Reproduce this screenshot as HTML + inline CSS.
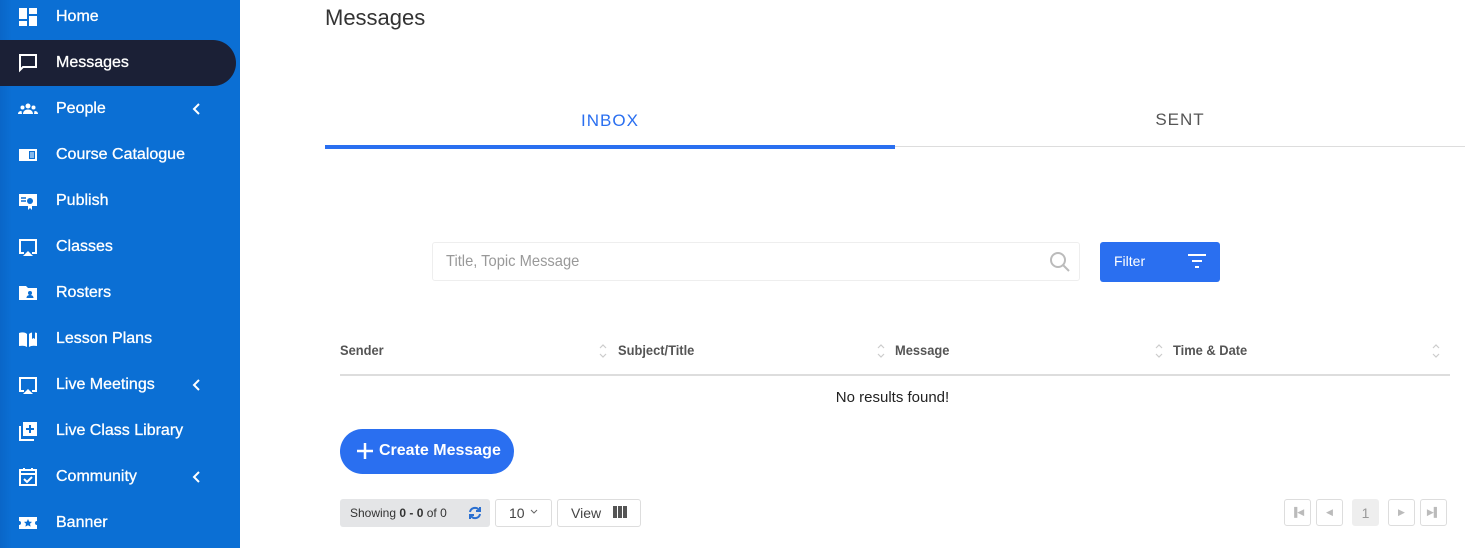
<!DOCTYPE html>
<html><head><style>
*{box-sizing:border-box;margin:0;padding:0}
body{width:1475px;height:548px;overflow:hidden;background:#fff;font-family:"Liberation Sans",sans-serif;position:relative}
#sb{position:absolute;left:0;top:0;width:240px;height:548px;background:linear-gradient(90deg,#0a66c8 0,#0b6fd4 12px,#0b6fd4 100%)}
.it{position:absolute;left:0;width:236px;height:46px;color:#fff;font-size:16px;display:flex;align-items:center}
.it svg{position:absolute;left:18px;width:20px;height:20px}
.it span{position:absolute;left:56px;-webkit-text-stroke:.3px #fff}
.it svg.ch{left:190px;width:12px;height:14px}
.act{background:#1b2036;border-radius:0 23px 23px 0}
.abs{position:absolute}
.th{position:absolute;top:342px;font-size:14px;color:#555;font-weight:bold;transform:scaleX(.92);transform-origin:left}
.sort{position:absolute;top:342px}
.pb{position:absolute;top:499px;width:27px;height:27px;border:1px solid #ddd;border-radius:3px;color:#bbb;font-size:9px;display:flex;align-items:center;justify-content:center}
</style></head><body>
<div id="sb">
<div class="it" style="top:-6px"><svg viewBox="0 0 20 20" fill="#fff"><rect x="1" y="1" width="8" height="11"/><rect x="11" y="1" width="8" height="6"/><rect x="1" y="14" width="8" height="5"/><rect x="11" y="9" width="8" height="10"/></svg><span>Home</span></div>
<div class="it act" style="top:40px"><svg viewBox="0 0 20 20" fill="none" stroke="#fff" stroke-width="2"><path d="M2 2h16v12H5l-3 3z"/></svg><span>Messages</span></div>
<div class="it" style="top:86px"><svg viewBox="0 0 20 20" fill="#fff"><circle cx="10" cy="7" r="2.5"/><circle cx="4.5" cy="8.5" r="2"/><circle cx="15.5" cy="8.5" r="2"/><path d="M5 15c0-3 2.5-4.5 5-4.5s5 1.5 5 4.5zM0 15c0-2 1.5-3 3.5-3L4 15zM20 15c0-2-1.5-3-3.5-3L16 15z"/></svg><span>People</span><svg class="ch" viewBox="0 0 12 14" fill="none" stroke="#fff" stroke-width="2"><path d="M9 2L4 7l5 5"/></svg></div>
<div class="it" style="top:132px"><svg viewBox="0 0 20 20" fill="#fff"><path d="M1 4h18v12H1z"/><path d="M11 6h6v8h-6z" fill="#0b6fd4"/><path d="M12 8h4M12 10h4M12 12h4" stroke="#fff"/></svg><span>Course Catalogue</span></div>
<div class="it" style="top:178px"><svg viewBox="0 0 20 20" fill="#fff"><path d="M1 3h18v12h-5v4l-2-2-2 2v-4H1z"/><circle cx="12" cy="10" r="3" fill="#0b6fd4"/><path d="M3 7h5M3 10h5" stroke="#0b6fd4" stroke-width="1.5"/></svg><span>Publish</span></div>
<div class="it" style="top:224px"><svg viewBox="0 0 20 20" fill="none" stroke="#fff" stroke-width="2"><path d="M6 16H2V3h16v13h-4"/><path d="M5 19l5-5 5 5z" fill="#fff" stroke="none"/></svg><span>Classes</span></div>
<div class="it" style="top:270px"><svg viewBox="0 0 20 20" fill="#fff"><path d="M1 3h7l2 2h9v12H1z"/><circle cx="12" cy="10" r="2" fill="#0b6fd4"/><path d="M8.5 15c0-2 1.5-3 3.5-3s3.5 1 3.5 3z" fill="#0b6fd4"/></svg><span>Rosters</span></div>
<div class="it" style="top:316px"><svg viewBox="0 0 20 20" fill="#fff"><path d="M1 4c3-1 6-1 8 1v13c-2-1.5-5-1.5-8-1zM11 5c2-2 5-2 8-1v13c-3-.5-6-.5-8 1z"/><path d="M14 3v7l1.5-1 1.5 1V3" fill="#0b6fd4"/></svg><span>Lesson Plans</span></div>
<div class="it" style="top:362px"><svg viewBox="0 0 20 20" fill="none" stroke="#fff" stroke-width="2"><path d="M6 16H2V3h16v13h-4"/><path d="M5 19l5-5 5 5z" fill="#fff" stroke="none"/></svg><span>Live Meetings</span><svg class="ch" viewBox="0 0 12 14" fill="none" stroke="#fff" stroke-width="2"><path d="M9 2L4 7l5 5"/></svg></div>
<div class="it" style="top:408px"><svg viewBox="0 0 20 20" fill="none" stroke="#fff" stroke-width="2"><path d="M2 5v14h14"/><rect x="5" y="1" width="14" height="14" fill="#fff" stroke="none"/><path d="M12 4v8M8 8h8" stroke="#0b6fd4"/></svg><span>Live Class Library</span></div>
<div class="it" style="top:454px"><svg viewBox="0 0 20 20" fill="none" stroke="#fff" stroke-width="2"><rect x="2" y="3" width="16" height="15"/><path d="M2 7h16M6 1v3M14 1v3" /><path d="M6 12l3 3 5-5"/></svg><span>Community</span><svg class="ch" viewBox="0 0 12 14" fill="none" stroke="#fff" stroke-width="2"><path d="M9 2L4 7l5 5"/></svg></div>
<div class="it" style="top:500px"><svg viewBox="0 0 20 20" fill="#fff"><path d="M1 4h18v4a2 2 0 0 0 0 4v4H1v-4a2 2 0 0 0 0-4z"/><path d="M10 6l1.2 2.6 2.8.3-2 1.9.6 2.8L10 12.2 7.4 13.6l.6-2.8-2-1.9 2.8-.3z" fill="#0b6fd4"/></svg><span>Banner</span></div>
</div>

<div class="abs" style="left:325px;top:5px;font-size:22px;color:#333">Messages</div>
<div class="abs" style="left:325px;top:111px;width:570px;text-align:center;font-size:17px;color:#2a6ff0;letter-spacing:1px">INBOX</div>
<div class="abs" style="left:895px;top:110px;width:570px;text-align:center;font-size:17px;color:#555;letter-spacing:1px">SENT</div>
<div class="abs" style="left:325px;top:146px;width:1140px;height:1px;background:#ddd"></div>
<div class="abs" style="left:325px;top:145px;width:570px;height:4px;background:#2a6ff0"></div>

<div class="abs" style="left:432px;top:242px;width:648px;height:39px;border:1px solid #eee;border-radius:3px"></div>
<div class="abs" style="left:446px;top:253px;font-size:16px;color:#999;transform:scaleX(.92);transform-origin:left">Title, Topic Message</div>
<svg class="abs" style="left:1048px;top:250px" width="24" height="24" viewBox="0 0 24 24" fill="none" stroke="#bbb" stroke-width="2"><circle cx="10" cy="10" r="7"/><path d="M15 15l6 6"/></svg>
<div class="abs" style="left:1100px;top:242px;width:120px;height:40px;background:#2a6ff0;border-radius:3px"></div>
<div class="abs" style="left:1114px;top:253px;font-size:14px;color:#fff">Filter</div>
<svg class="abs" style="left:1187px;top:252px" width="20" height="18" viewBox="0 0 20 18" stroke="#fff" stroke-width="2"><path d="M1 3h18M5 9h10M8 15h4"/></svg>

<div class="th" style="left:340px">Sender</div>
<div class="th" style="left:618px">Subject/Title</div>
<div class="th" style="left:895px">Message</div>
<div class="th" style="left:1173px">Time &amp; Date</div>
<svg class="sort" style="left:598px" width="10" height="18" fill="none" stroke="#ccc" stroke-width="1.2"><path d="M2 6l3-3 3 3M2 12l3 3 3-3"/></svg>
<svg class="sort" style="left:876px" width="10" height="18" fill="none" stroke="#ccc" stroke-width="1.2"><path d="M2 6l3-3 3 3M2 12l3 3 3-3"/></svg>
<svg class="sort" style="left:1154px" width="10" height="18" fill="none" stroke="#ccc" stroke-width="1.2"><path d="M2 6l3-3 3 3M2 12l3 3 3-3"/></svg>
<svg class="sort" style="left:1431px" width="10" height="18" fill="none" stroke="#ccc" stroke-width="1.2"><path d="M2 6l3-3 3 3M2 12l3 3 3-3"/></svg>
<div class="abs" style="left:340px;top:374px;width:1110px;height:2px;background:#ddd"></div>
<div class="abs" style="left:340px;top:389px;width:1105px;text-align:center;font-size:15px;color:#222">No results found!</div>

<div class="abs" style="left:340px;top:429px;width:174px;height:45px;background:#2a6ff0;border-radius:23px"></div>
<svg class="abs" style="left:356px;top:442px" width="18" height="18" viewBox="0 0 18 18" stroke="#fff" stroke-width="2.5"><path d="M9 1v16M1 9h16"/></svg>
<div class="abs" style="left:379px;top:442px;font-size:16px;font-weight:bold;color:#fff">Create Message</div>

<div class="abs" style="left:340px;top:499px;width:150px;height:28px;background:#e4e5e7;border-radius:3px"></div>
<div class="abs" style="left:350px;top:506px;font-size:12px;color:#333">Showing <b>0 - 0</b> of 0</div>
<svg class="abs" style="left:468px;top:506px" width="14" height="14" viewBox="0 0 14 14" fill="none" stroke="#2a6fd0" stroke-width="2"><path d="M2 6a5 5 0 0 1 9-2M12 8a5 5 0 0 1-9 2"/><path d="M12 1v4H8M2 13V9h4" /></svg>
<div class="abs" style="left:495px;top:499px;width:57px;height:28px;border:1px solid #ddd;border-radius:3px;font-size:14px;color:#444;padding:5px 0 0 13px">10</div>
<svg class="abs" style="left:530px;top:509px" width="8" height="6" fill="none" stroke="#666"><path d="M1 1l3 3 3-3"/></svg>
<div class="abs" style="left:557px;top:499px;width:84px;height:28px;border:1px solid #ddd;border-radius:3px;font-size:14px;color:#444;padding:5px 0 0 13px">View</div>
<svg class="abs" style="left:613px;top:506px" width="15" height="12"><rect x="0" y="0" width="4" height="12" fill="#555"/><rect x="5" y="0" width="4" height="12" fill="#555"/><rect x="10" y="0" width="4" height="12" fill="#555"/></svg>

<div class="pb" style="left:1284px">▐◀</div>
<div class="pb" style="left:1316px">◀</div>
<div class="pb" style="left:1352px;background:#eee;border-color:#eee;color:#999;font-size:14px">1</div>
<div class="pb" style="left:1388px">▶</div>
<div class="pb" style="left:1420px">▶▌</div>
</body></html>
